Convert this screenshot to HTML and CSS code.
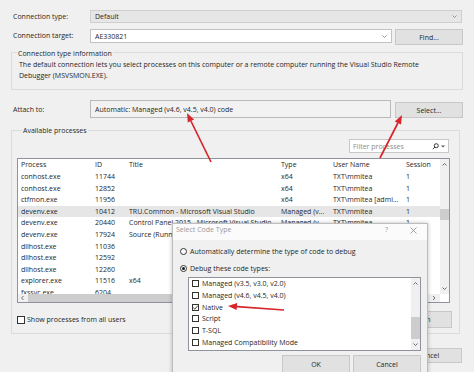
FILE: index.html
```html
<!DOCTYPE HTML>
<html>
<head>
  <title>Attach to Process</title>
  <meta name="viewport" content="width=device-width, initial-scale=1">
  <link rel="stylesheet" href="styles.css">
</head>
<body>

  <div class="window">
    <div class="row row-type">
      <label>Connection type:</label>
      <div class="field disabled">Default<svg class="caret" width="5" height="3"><path d="M0.5 0.5 L2.5 2.5 L4.5 0.5" /></svg></div>
    </div>

    <div class="row row-target">
      <label>Connection target:</label>
      <div class="field">AE330821<svg class="caret" width="5" height="3"><path d="M0.5 0.5 L2.5 2.5 L4.5 0.5" /></svg></div>
      <button class="btn">Find...</button>
    </div>

    <div class="group info">
      <div class="legend">Connection type information</div>
      <p>The default connection lets you select processes on this computer or a remote computer running the Visual Studio Remote<br>Debugger (MSVSMON.EXE).</p>
    </div>

    <div class="row row-attach">
      <label>Attach to:</label>
      <div class="field readonly">Automatic: Managed (v4.6, v4.5, v4.0) code</div>
      <button class="btn">Select...</button>
    </div>

    <div class="group procs">
      <div class="legend">Available processes</div>
      <div class="filter-row">
        <div class="filter">
          <span>Filter processes</span>
          <svg class="search" width="7" height="7"><circle cx="4.3" cy="2.7" r="2" /><path d="M2.9 4.1 L0.8 6.2" /></svg>
          <svg class="drop" width="4" height="3"><path d="M0 0.5 L4 0.5 L2 2.5 Z" /></svg>
        </div>
      </div>

      <div class="list">
        <div class="table">
          <div class="trow head"><span>Process</span><span>ID</span><span>Title</span><span>Type</span><span>User Name</span><span>Session</span></div>
          <div class="trow"><span>conhost.exe</span><span>11744</span><span></span><span>x64</span><span>TXT\mmitea</span><span>1</span></div>
          <div class="trow"><span>conhost.exe</span><span>12852</span><span></span><span>x64</span><span>TXT\mmitea</span><span>1</span></div>
          <div class="trow"><span>ctfmon.exe</span><span>11956</span><span></span><span>x64</span><span>TXT\mmitea [admi...</span><span>1</span></div>
          <div class="trow selected"><span>devenv.exe</span><span>10412</span><span>TRU.Common - Microsoft Visual Studio</span><span>Managed (v...</span><span>TXT\mmitea</span><span>1</span></div>
          <div class="trow"><span>devenv.exe</span><span>20440</span><span>Control Panel 2015 - Microsoft Visual Studio</span><span>Managed (v...</span><span>TXT\mmitea</span><span>1</span></div>
          <div class="trow"><span>devenv.exe</span><span>17924</span><span>Source (Running) - Microsoft Visual Studio</span><span>Managed (v...</span><span>TXT\mmitea</span><span>1</span></div>
          <div class="trow"><span>dllhost.exe</span><span>11036</span><span></span><span>x64</span><span>TXT\mmitea</span><span>1</span></div>
          <div class="trow"><span>dllhost.exe</span><span>12592</span><span></span><span>x64</span><span>TXT\mmitea</span><span>1</span></div>
          <div class="trow"><span>dllhost.exe</span><span>12260</span><span></span><span>x64</span><span>TXT\mmitea</span><span>1</span></div>
          <div class="trow"><span>explorer.exe</span><span>11516</span><span>x64</span><span>x64</span><span>TXT\mmitea</span><span>1</span></div>
          <div class="trow"><span>fxssvc.exe</span><span>6204</span><span></span><span>x64</span><span>TXT\mmitea</span><span>1</span></div>
        </div>
        <div class="vscroll">
          <svg class="arrow-btn" width="9" height="11"><path d="M2.5 6.5 L4.5 4.5 L6.5 6.5" /></svg>
          <div class="vthumb"></div>
          <svg class="arrow-btn end" width="9" height="11"><path d="M2.5 4.5 L4.5 6.5 L6.5 4.5" /></svg>
        </div>
        <div class="hscroll">
          <svg class="arrow-btn" width="9" height="8"><path d="M5.5 2 L3.5 4 L5.5 6" /></svg>
          <div class="hthumb"></div>
          <svg class="arrow-btn" width="12" height="8"><path d="M5 2 L7 4 L5 6" /></svg>
        </div>
        <div class="corner"></div>
      </div>

      <div class="bottom-row">
        <label class="check-label"><span class="box"></span>Show processes from all users</label>
        <button class="btn refresh">Refresh</button>
      </div>
    </div>

    <div class="actions">
      <button class="btn">Attach</button>
      <button class="btn">Cancel</button>
    </div>
  </div>

  <!-- modal on top of the attach window -->
  <div class="dialog">
    <div class="dlg-title">
      <span class="dlg-name">Select Code Type</span>
      <span class="dlg-help">?</span>
      <svg class="dlg-close" width="7" height="7"><path d="M0.5 0.5 L6.5 6.5 M6.5 0.5 L0.5 6.5" /></svg>
    </div>
    <div class="dlg-body">
      <div class="radio-row"><span class="radio"></span>Automatically determine the type of code to debug</div>
      <div class="radio-row"><span class="radio on"></span>Debug these code types:</div>
      <div class="codelist">
        <div class="code-items">
          <div class="code-item"><span class="box"></span>Managed (v3.5, v3.0, v2.0)</div>
          <div class="code-item"><span class="box"></span>Managed (v4.6, v4.5, v4.0)</div>
          <div class="code-item"><span class="box checked"><svg width="7" height="7"><path d="M1.2 3.6 L2.9 5.2 L5.8 1.6" /></svg></span>Native</div>
          <div class="code-item"><span class="box"></span>Script</div>
          <div class="code-item"><span class="box"></span>T-SQL</div>
          <div class="code-item"><span class="box"></span>Managed Compatibility Mode</div>
        </div>
        <div class="vscroll small">
          <svg class="arrow-btn" width="9" height="11"><path d="M2.5 6.5 L4.5 4.5 L6.5 6.5" /></svg>
          <div class="vthumb"></div>
          <svg class="arrow-btn end" width="9" height="11"><path d="M2.5 4.5 L4.5 6.5 L6.5 4.5" /></svg>
        </div>
      </div>
      <div class="dlg-buttons">
        <button class="btn">OK</button>
        <button class="btn">Cancel</button>
      </div>
    </div>
  </div>

  <svg class="arrows" width="474" height="372">
    <g>
      <line x1="211" y1="162" x2="190.9" y2="121" />
      <polygon points="187,113 194.1,119.5 187.8,122.6" />
      <line x1="380" y1="158" x2="397.9" y2="123" />
      <polygon points="402,115 401,124.6 394.8,121.4" />
      <line x1="284" y1="310" x2="237" y2="306.6" />
      <polygon points="228,306 237.2,303.1 236.7,310.1" />
    </g>
  </svg>

</body>
</html>
```

FILE: styles.css
```css
* { box-sizing: border-box; }
body {
  margin: 0;
  width: 474px;
  height: 372px;
  overflow: hidden;
  position: relative;
  background: #f0f0f0;
  font-family: "Open Sans", "Noto Sans", sans-serif;
  font-size: 7px;
  color: #262626;
}
p { margin: 0; }

.window { padding: 10px 11px 0 11px; }

.row { display: flex; align-items: center; }
.row label { width: 79px; padding-left: 2px; }
.row-type { height: 13px; }
.row-target { margin-top: 6px; height: 16px; align-items: flex-start; }
.row-target label { line-height: 14px; }
.row-attach { margin-top: 10px; height: 18px; }

.field {
  flex: 1;
  height: 13px;
  display: flex;
  align-items: center;
  padding-left: 4px;
  background: #fff;
  border: 1px solid #c2c2c2;
}
.field.disabled { background: #e6e6e6; border-color: #cfcfcf; margin-right: 1px; }
.row-target .field { height: 14px; margin-right: 3px; }
.field.readonly { height: 18px; background: #f2f2f2; border-color: #b9b9b9; margin-right: 4px; }
.caret { margin-left: auto; margin-right: 4px; }
.caret path { stroke: #8a8a8a; fill: none; stroke-width: 0.9; }

.btn {
  font: inherit;
  color: #262626;
  background: #e1e1e1;
  border: 1px solid #c8c8c8;
  width: 68px;
  height: 16px;
  padding: 0;
}
.row-attach .btn { align-self: flex-end; }

.group {
  border: 1px solid #dcdcdc;
  position: relative;
}
.legend {
  line-height: 10px;
  margin-top: -5px;
  margin-left: 5px;
  padding: 0 1px;
  background: #f0f0f0;
  align-self: flex-start;
  width: max-content;
}
.info {
  margin-top: 7px;
  height: 38px;
  padding: 0 0 0 7px;
}
.info .legend { margin-left: -2px; margin-top: -4px; }
.info p { line-height: 11px; margin-top: 0; }

.procs {
  margin-top: 12px;
  margin-right: 3px;
  height: 204px;
  padding: 0 9px 0 5px;
}

.filter-row { display: flex; justify-content: flex-end; margin-top: 3px; }
.filter {
  width: 100px;
  height: 14px;
  margin-right: 1px;
  background: #fff;
  border: 1px solid #c8c8c8;
  display: flex;
  align-items: center;
  padding-left: 3px;
  color: #8c8c8c;
}
.search { margin-left: auto; }
.search circle, .search path { stroke: #333; stroke-width: 1; fill: none; }
.drop { margin: 0 3px 0 2px; }
.drop path { fill: #555; }

.list {
  margin-top: 5px;
  height: 145px;
  background: #fff;
  border: 1px solid #8f949c;
  display: grid;
  grid-template-columns: 1fr 9px;
  grid-template-rows: 1fr 8px;
}
.table { overflow: hidden; }
.trow {
  display: grid;
  grid-template-columns: 74px 34px 152px 52px 73px 1fr;
  height: 11.6px;
  line-height: 11.6px;
  white-space: nowrap;
}
.trow span { padding-left: 3px; overflow: hidden; }
.trow.head { height: 12px; line-height: 12px; }
.trow.selected { background: #e6e6e6; }

.vscroll {
  background: #f0f0f0;
  display: flex;
  flex-direction: column;
}
.vthumb { margin-top: 39px; height: 11px; background: #cdcdcd; }
.arrow-btn { display: block; flex-shrink: 0; }
.arrow-btn.end { margin-top: auto; }
.arrow-btn path { stroke: #606060; stroke-width: 0.9; fill: none; }

.hscroll {
  background: #f0f0f0;
  display: flex;
  align-items: center;
}
.hthumb { height: 8px; flex: 1; margin: 0 3px 0 1px; background: #cdcdcd; }
.corner { background: #fff; }

.bottom-row {
  display: flex;
  align-items: center;
  justify-content: space-between;
  margin-top: 8px;
  height: 17px;
}
.check-label { display: flex; align-items: center; gap: 2px; }
.box {
  display: inline-block;
  width: 8px;
  height: 8px;
  background: #fff;
  border: 1px solid #333;
}
.btn.refresh { height: 17px; margin-right: -2px; }

.actions {
  display: flex;
  justify-content: flex-end;
  gap: 4px;
  margin-top: 14px;
  padding-right: 1px;
}
.actions .btn { width: 67px; height: 15px; }

/* Select Code Type dialog */
.dialog {
  position: absolute;
  left: 172px;
  top: 223px;
  width: 256px;
  height: 160px;
  background: #f0f0f0;
  border: 1px solid #bdbdbd;
  box-shadow: 0 0 4px rgba(0, 0, 0, 0.25);
}
.dlg-title {
  height: 16px;
  background: #fbfbfb;
  display: flex;
  align-items: flex-start;
  padding: 1px 0 0 3px;
  line-height: 10px;
  color: #9a9a9a;
}
.dlg-help { margin-left: auto; margin-right: 22px; }
.dlg-close { margin: 2px 10px 0 0; }
.dlg-close path { stroke: #8a8a8a; stroke-width: 0.8; }

.dlg-body { padding: 6px 6px 0 7px; }
.radio-row { display: flex; align-items: center; height: 11px; gap: 3px; }
.radio-row + .radio-row { margin-top: 6px; }
.radio {
  width: 7px;
  height: 7px;
  border-radius: 50%;
  border: 1px solid #333;
  background: #fff;
  position: relative;
}
.radio.on::after {
  content: "";
  position: absolute;
  left: 1px;
  top: 1px;
  width: 3px;
  height: 3px;
  border-radius: 50%;
  background: #1a1a1a;
}

.codelist {
  margin: 3px 0 0 8px;
  height: 74px;
  background: #fff;
  border: 1px solid #8f949c;
  display: flex;
}
.code-items { flex: 1; padding-left: 3px; }
.code-item { display: flex; align-items: center; gap: 3px; height: 11.7px; }
.code-item .box { width: 7px; height: 7px; }
.box.checked { position: relative; }
.box.checked svg { position: absolute; left: -1px; top: -1px; }
.box.checked path { stroke: #333; stroke-width: 0.9; fill: none; }
.vscroll.small { width: 9px; }
.vscroll.small .vthumb { margin-top: 28px; height: 23px; }

.dlg-buttons {
  display: flex;
  justify-content: flex-end;
  gap: 3px;
  margin-top: 4px;
}
.dlg-buttons .btn { width: 68px; height: 18px; }

.arrows { position: absolute; left: 0; top: 0; pointer-events: none; }
.arrows line { stroke: #d6262c; stroke-width: 1.7; }
.arrows polygon { fill: #d6262c; }
```
